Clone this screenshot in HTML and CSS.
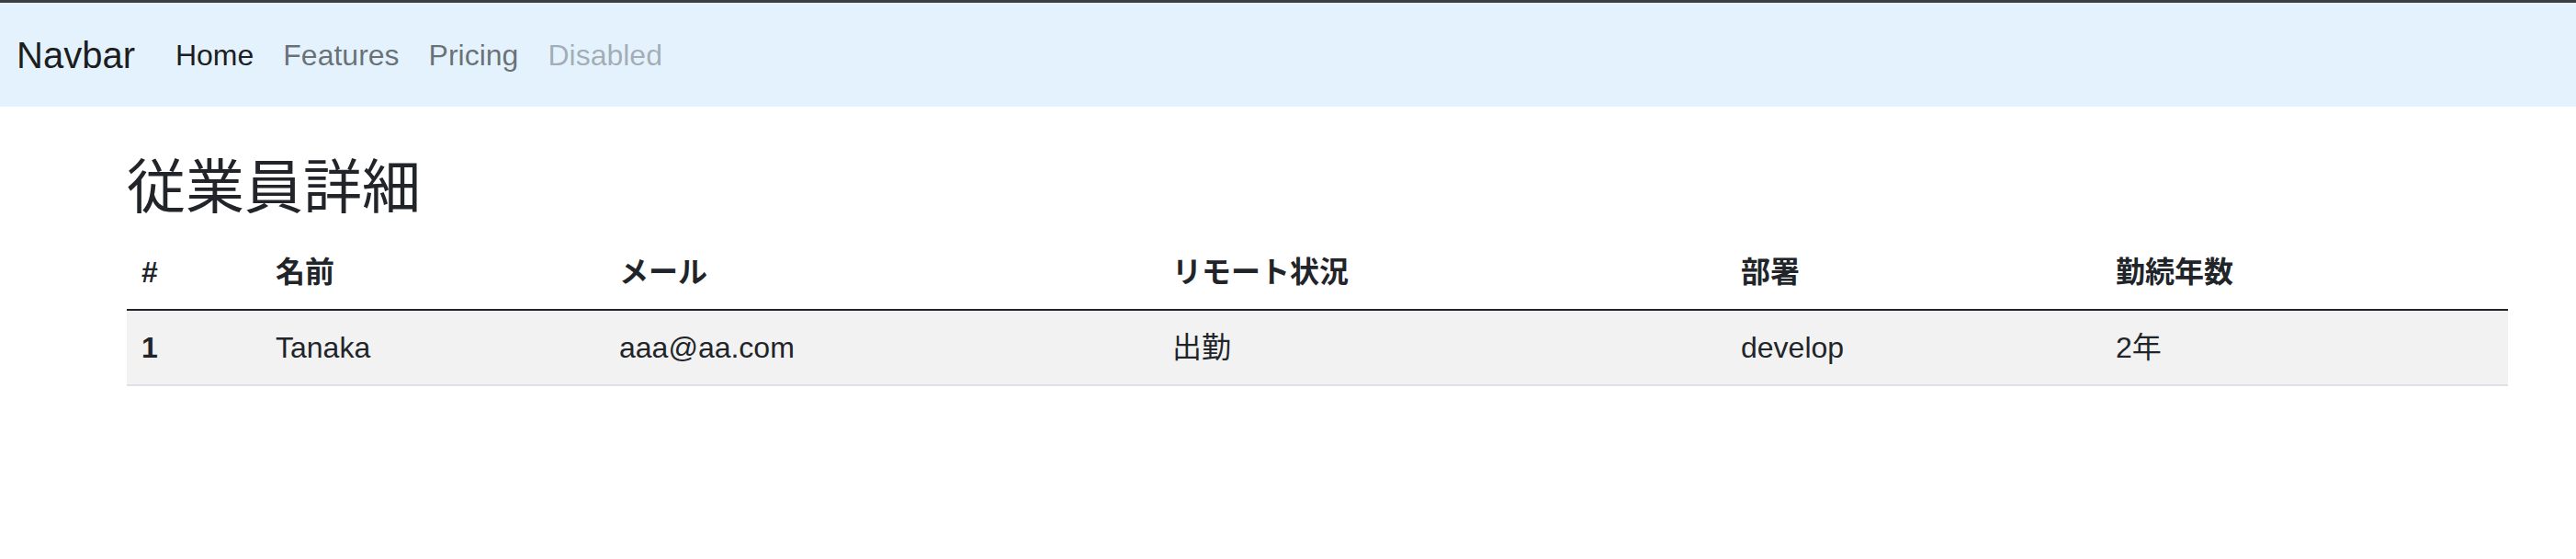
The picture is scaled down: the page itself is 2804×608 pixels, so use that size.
FILE: index.html
```html
<!DOCTYPE html>
<html lang="ja">
<head>
<meta charset="utf-8">
<title>従業員詳細</title>
<link rel="stylesheet" href="styles.css">
</head>
<body>
<div class="topline"></div>
<nav class="navbar">
  <a class="brand" href="#">Navbar</a>
  <ul class="nav">
    <li><a class="nav-link active" href="#">Home</a></li>
    <li><a class="nav-link" href="#">Features</a></li>
    <li><a class="nav-link" href="#">Pricing</a></li>
    <li><a class="nav-link disabled">Disabled</a></li>
  </ul>
</nav>
<main class="container">
  <h2 class="title">従業員詳細</h2>
  <table class="table">
    <colgroup>
      <col class="c1"><col class="c2"><col class="c3"><col class="c4"><col class="c5"><col class="c6">
    </colgroup>
    <thead>
      <tr>
        <th>#</th>
        <th>名前</th>
        <th>メール</th>
        <th>リモート状況</th>
        <th>部署</th>
        <th>勤続年数</th>
      </tr>
    </thead>
    <tbody>
      <tr>
        <th>1</th>
        <td>Tanaka</td>
        <td>aaa@aa.com</td>
        <td>出勤</td>
        <td>develop</td>
        <td>2年</td>
      </tr>
    </tbody>
  </table>
</main>
</body>
</html>
```
FILE: styles.css
```css
html, body {
  margin: 0;
  padding: 0;
  background: #ffffff;
  font-family: "Liberation Sans", "Noto Sans CJK JP", sans-serif;
  color: #212529;
  font-size: 32px;
  line-height: 1.5;
}

.topline {
  height: 3px;
  background: #3d3e42;
}

.navbar {
  display: flex;
  align-items: center;
  background: #e3f2fd;
  padding: 16px 16px 16px 18px;
  height: 81px;
}

.brand {
  font-size: 40px;
  line-height: 60px;
  padding: 10px 0;
  margin-right: 28px;
  color: rgba(0, 0, 0, 0.9);
  text-decoration: none;
}

.nav {
  display: flex;
  list-style: none;
  margin: 0;
  padding: 0;
}

.nav-link {
  display: block;
  padding: 16px 16px;
  font-size: 32px;
  line-height: 48px;
  color: rgba(0, 0, 0, 0.55);
  text-decoration: none;
}

.nav-link.active {
  color: rgba(0, 0, 0, 0.9);
}

.nav-link.disabled {
  color: rgba(0, 0, 0, 0.3);
}

.container {
  padding: 50px 0 0 138px;
  width: 2592px;
}

.title {
  font-family: "Liberation Sans", "Noto Sans CJK JP", sans-serif;
  font-weight: 400;
  font-size: 64px;
  line-height: 1.2;
  margin: 0 0 13px 0;
}

.table {
  width: 2592px;
  table-layout: fixed;
  border-collapse: collapse;
}

.c1 { width: 146px; }
.c2 { width: 374px; }
.c3 { width: 602px; }
.c4 { width: 619px; }
.c5 { width: 408px; }
.c6 { width: 443px; }

.table th,
.table td {
  padding: 16px;
  text-align: left;
  vertical-align: top;
  line-height: 48px;
  font-size: 32px;
}

.table th {
  font-weight: 700;
}

.table thead th {
  border-bottom: 2px solid #212529;
}

.table tbody tr {
  background: #f2f2f2;
  border-bottom: 2px solid #dee2e6;
}
```
